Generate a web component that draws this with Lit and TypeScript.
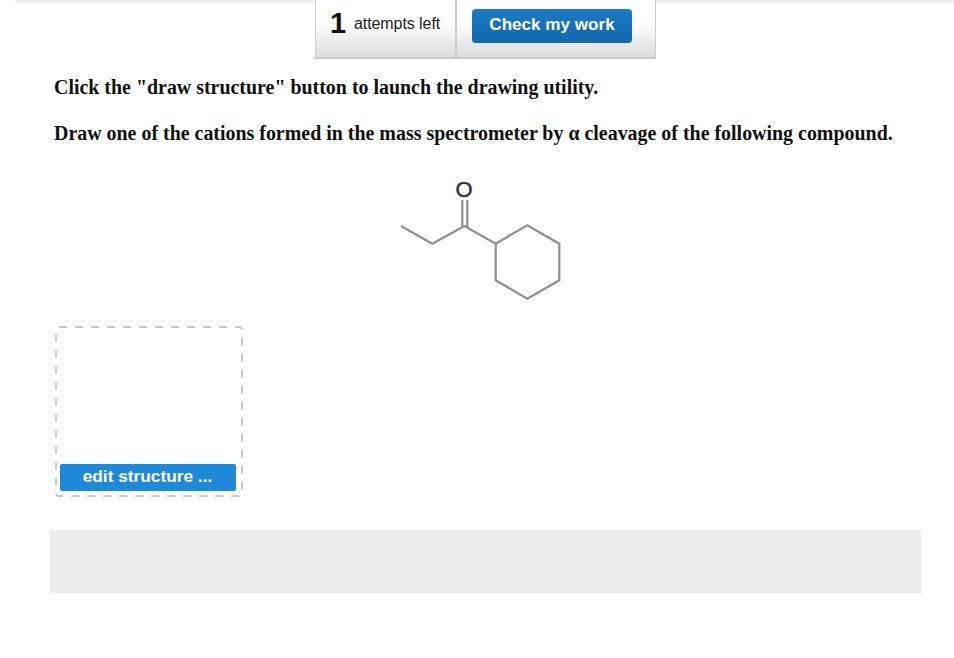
import { LitElement, html, css } from "lit";
import { customElement } from "lit/decorators.js";

@customElement("app-root")
export class AppRoot extends LitElement {
  static styles = css`
    :host { display: block; width: 954px; height: 658px; background: #fff; overflow: hidden; }
    .header { margin-left: 15px; padding-left: 300px; background: linear-gradient(#e9e9e9 0, #fff 5px); }
    .toolbar { display: flex; width: 341px; height: 59px; box-sizing: border-box;
      border: 1px solid #ccc; border-top: none; border-bottom-width: 2px; font-family: "Liberation Sans", sans-serif;
      background: linear-gradient(#fff 0, #fff 22px, #dcdcdc 100%); }
    .attempts { width: 141px; border-right: 2px solid #ccc; display: flex; align-items: flex-start; padding: 8px 0 0 14px; box-sizing: border-box; }
    .num { font-size: 29px; font-weight: bold; line-height: 30px; color: #111; width: 24px; }
    .label { font-size: 16px; letter-spacing: -0.08px; line-height: 18px; margin-top: 7px; color: #222; }
    .action { flex: 1; padding: 9px 0 0 15px; }
    .check { width: 160px; height: 34px; box-sizing: border-box; border-radius: 4px; background: linear-gradient(#1b7cc6, #1367ab);
      color: #fff; font-weight: bold; font-size: 17.1px; display: flex; align-items: center; justify-content: center; padding-bottom: 3px; }
    .content { padding: 0 0 0 54px; font-family: "Liberation Serif", serif; font-weight: bold; font-size: 19.93px; color: #111; }
    p { margin: 0; line-height: 24px; white-space: nowrap; }
    .p1 { padding-top: 16px; }
    .p2 { padding-top: 22px; }
    .molecule { display: block; margin: 26px 0 0 336px; }
    .molecule text { font-family: "Liberation Sans", sans-serif; font-size: 22px; font-weight: normal; fill: #333; stroke: #333; stroke-width: 0.5px; }
    .box { position: relative; width: 188px; height: 171px; margin: 20px 0 0 1px; box-sizing: border-box;
      display: flex; align-items: flex-end; padding: 0 0 6px 4.5px; }
    .outline { position: absolute; inset: 0; }
    .edit { position: relative; width: 176px; height: 27px; background: #1e88d9; border-radius: 2px; color: #fff; font-family: "Liberation Sans", sans-serif;
      font-size: 17.3px; font-weight: bold; text-align: center; line-height: 25px; }
    .feedback { width: 871px; height: 63px; margin: 33px 0 0 50px; background: #ececec; }
  `;

  render() {
    return html`
      <div class="header">
        <div class="toolbar">
          <div class="attempts"><span class="num">1</span><span class="label">attempts left</span></div>
          <div class="action"><div class="check">Check my work</div></div>
        </div>
      </div>
      <div class="content">
        <p class="p1">Click the "draw structure" button to launch the drawing utility.</p>
        <p class="p2">Draw one of the cations formed in the mass spectrometer by α cleavage of the following compound.</p>
        <svg class="molecule" width="180" height="135" viewBox="390 170 180 135" fill="none" stroke="#8f8f8f" stroke-width="2.2">
          <text x="464" y="196" text-anchor="middle">O</text>
          <path d="M401 225 L432.3 242.7 L464.5 225 L495.7 242.7 L527.3 224.3 L559.3 242.7 V279.3 L527.3 297.7 L495.7 279.3 V242.7" />
          <path d="M462.3 199 V225 M467.3 199 V226" />
        </svg>
        <div class="box">
          <svg class="outline" width="188" height="171" fill="none" stroke="#c8c8c8" stroke-width="2">
            <rect x="1" y="1" width="186" height="169" rx="3" stroke-dasharray="8 8" />
          </svg>
          <div class="edit">edit structure ...</div>
        </div>
      </div>
      <div class="feedback"></div>
    `;
  }
}
